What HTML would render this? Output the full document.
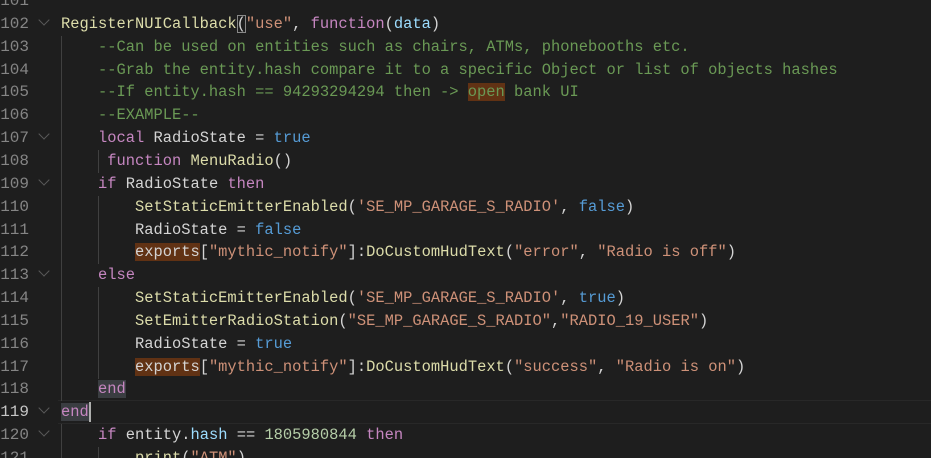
<!DOCTYPE html>
<html><head><meta charset="utf-8"><style>
html,body{margin:0;padding:0;background:#1e1e1e;width:931px;height:458px;overflow:hidden}
.ed{position:relative;width:931px;height:458px;font-family:"Liberation Mono","DejaVu Sans Mono",monospace;font-size:15.42px}
.ln{position:absolute;left:0;width:29px;text-align:right;color:#858585;height:22.85px;line-height:22.85px;font-size:16px}
.c{position:absolute;left:61px;white-space:pre;color:#d4d4d4;height:22.85px;line-height:22.85px}
.fd{position:absolute;left:40px;width:7px;height:7px;border-right:1.3px solid #5a5a5a;border-bottom:1.3px solid #5a5a5a;transform:rotate(45deg)}
.g{position:absolute;width:1px;background:#404040}
.f{color:#dcdcaa}.s{color:#ce9178}.m{color:#6a9955}.k{color:#c586c0}.b{color:#569cd6}.v{color:#9cdcfe}.n{color:#b5cea8}.w{color:#d4d4d4}
.hl{background:#613214}
.bm{background:#3a3d41}
</style></head><body><div class="ed">
<div style="position:absolute;left:58px;top:400px;width:873px;height:22px;border-top:1px solid #282828;border-bottom:1px solid #282828"></div>
<div class="g" style="left:61px;top:36px;height:365px"></div>
<div class="g" style="left:61px;top:424px;height:40px"></div>
<div class="g" style="left:98px;top:150px;height:23px"></div>
<div class="g" style="left:98px;top:196px;height:68px"></div>
<div class="g" style="left:98px;top:287px;height:92px"></div>
<div class="g" style="left:98px;top:447px;height:20px"></div>

<div class="ln" style="top:-10px">101</div>
<div class="ln" style="top:12.85px">102</div><div class="fd" style="top:16px"></div>
<div class="c" style="top:12.85px"><span class="f">RegisterNUICallback</span><span style="outline:1px solid #888;outline-offset:-1px">(</span><span class="s">"use"</span>, <span class="k">function</span>(<span class="v">data</span>)</div>
<div class="ln" style="top:35.7px">103</div>
<div class="c m" style="top:35.7px">    --Can be used on entities such as chairs, ATMs, phonebooths etc.</div>
<div class="ln" style="top:58.55px">104</div>
<div class="c m" style="top:58.55px">    --Grab the entity.hash compare it to a specific Object or list of objects hashes</div>
<div class="ln" style="top:81.4px">105</div>
<div class="c m" style="top:81.4px">    --If entity.hash == 94293294294 then -&gt; <span class="hl">open</span> bank UI</div>
<div class="ln" style="top:104.25px">106</div>
<div class="c m" style="top:104.25px">    --EXAMPLE--</div>
<div class="ln" style="top:127.1px">107</div>
<div class="c" style="top:127.1px">    <span class="k">local</span> <span class="w">RadioState</span> = <span class="b">true</span></div>
<div class="ln" style="top:149.95px">108</div><div class="fd" style="top:130px"></div>
<div class="c" style="top:149.95px">     <span class="k">function</span> <span class="f">MenuRadio</span>()</div>
<div class="ln" style="top:172.8px">109</div><div class="fd" style="top:176px"></div>
<div class="c" style="top:172.8px">    <span class="k">if</span> <span class="w">RadioState</span> <span class="k">then</span></div>
<div class="ln" style="top:195.65px">110</div>
<div class="c" style="top:195.65px">        <span class="f">SetStaticEmitterEnabled</span>(<span class="s">'SE_MP_GARAGE_S_RADIO'</span>, <span class="b">false</span>)</div>
<div class="ln" style="top:218.5px">111</div>
<div class="c" style="top:218.5px">        <span class="w">RadioState</span> = <span class="b">false</span></div>
<div class="ln" style="top:241.35px">112</div>
<div class="c" style="top:241.35px">        <span class="hl w">exports</span>[<span class="s">"mythic_notify"</span>]:<span class="f">DoCustomHudText</span>(<span class="s">"error"</span>, <span class="s">"Radio is off"</span>)</div>
<div class="ln" style="top:264.2px">113</div><div class="fd" style="top:267px"></div>
<div class="c" style="top:264.2px">    <span class="k">else</span></div>
<div class="ln" style="top:287.05px">114</div>
<div class="c" style="top:287.05px">        <span class="f">SetStaticEmitterEnabled</span>(<span class="s">'SE_MP_GARAGE_S_RADIO'</span>, <span class="b">true</span>)</div>
<div class="ln" style="top:309.9px">115</div>
<div class="c" style="top:309.9px">        <span class="f">SetEmitterRadioStation</span>(<span class="s">"SE_MP_GARAGE_S_RADIO"</span>,<span class="s">"RADIO_19_USER"</span>)</div>
<div class="ln" style="top:332.75px">116</div>
<div class="c" style="top:332.75px">        <span class="w">RadioState</span> = <span class="b">true</span></div>
<div class="ln" style="top:355.6px">117</div>
<div class="c" style="top:355.6px">        <span class="hl w">exports</span>[<span class="s">"mythic_notify"</span>]:<span class="f">DoCustomHudText</span>(<span class="s">"success"</span>, <span class="s">"Radio is on"</span>)</div>
<div class="ln" style="top:378.45px">118</div>
<div class="c" style="top:378.45px">    <span class="k bm">end</span></div>
<div class="ln" style="top:401.3px;color:#c6c6c6">119</div><div class="fd" style="top:404px"></div>
<div class="c" style="top:401.3px"><span class="k bm">end</span><span style="display:inline-block;width:2px;height:20px;background:#aeafad;vertical-align:middle"></span></div>
<div class="ln" style="top:424.15px">120</div><div class="fd" style="top:427px"></div>
<div class="c" style="top:424.15px">    <span class="k">if</span> <span class="w">entity</span>.<span class="v">hash</span> == <span class="n">1805980844</span> <span class="k">then</span></div>
<div class="ln" style="top:447px">121</div>
<div class="c" style="top:447px">        <span class="f">print</span>(<span class="s">"ATM"</span>)</div>
</div></body></html>
